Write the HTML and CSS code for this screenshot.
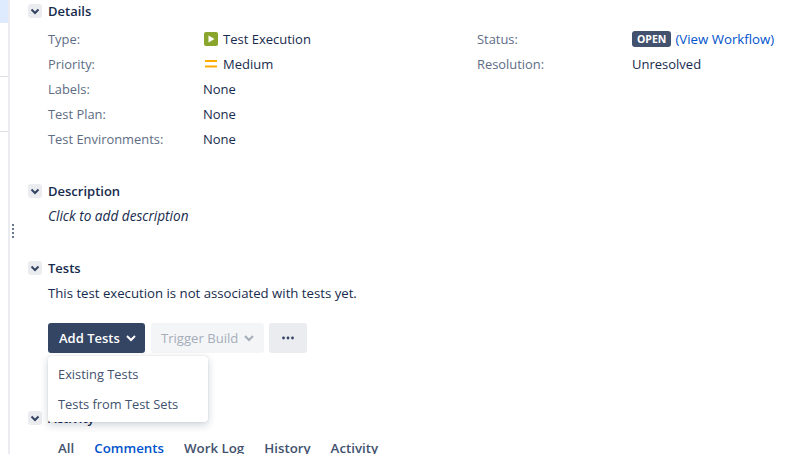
FILE: index.html
```html
<!DOCTYPE html>
<html lang="en">
<head>
<meta charset="utf-8">
<title>Test Execution</title>
<link rel="stylesheet" href="styles.css">
</head>
<body>
<div class="page">
  <aside class="rail">
    <div class="rail-item rail-active"></div>
    <div class="rail-item rail-mid"></div>
    <div class="rail-item rail-low"></div>
    <div class="grip"><i></i><i></i><i></i><i></i></div>
  </aside>
  <main class="content">
    <section class="module details">
      <h2 class="module-head"><span class="toggle"><svg viewBox="0 0 14 14" class="chev"><path d="M3.500 5.500 7 9l3.500-3.500"/></svg></span>Details</h2>
      <div class="details-grid">
        <dl class="fields col-left">
          <dt>Type:</dt><dd><svg class="type-icon" viewBox="0 0 14 14"><rect width="14" height="14" rx="2" fill="#89a52b"/><path d="M4.500 3.500 10.500 7 4.500 10.500z" fill="#fff"/></svg>Test Execution</dd>
          <dt>Priority:</dt><dd><svg class="type-icon" viewBox="0 0 14 14"><path d="M1 4h12M1 9.500h12" stroke="#ffab00" stroke-width="2"/></svg>Medium</dd>
          <dt>Labels:</dt><dd>None</dd>
          <dt>Test Plan:</dt><dd>None</dd>
          <dt>Test Environments:</dt><dd>None</dd>
        </dl>
        <dl class="fields col-right">
          <dt>Status:</dt><dd><span class="lozenge">OPEN</span><a href="#" class="link">(View Workflow)</a></dd>
          <dt>Resolution:</dt><dd>Unresolved</dd>
        </dl>
      </div>
    </section>
    <section class="module description">
      <h2 class="module-head"><span class="toggle"><svg viewBox="0 0 14 14" class="chev"><path d="M3.500 5.500 7 9l3.500-3.500"/></svg></span>Description</h2>
      <p class="body-text hint"><em>Click to add description</em></p>
    </section>
    <section class="module tests">
      <h2 class="module-head"><span class="toggle"><svg viewBox="0 0 14 14" class="chev"><path d="M3.500 5.500 7 9l3.500-3.500"/></svg></span>Tests</h2>
      <p class="body-text notice">This test execution is not associated with tests yet.</p>
      <div class="toolbar">
        <button class="btn btn-primary">Add Tests<svg viewBox="0 0 14 14" class="btn-chev"><path d="M3 5l4 4 4-4"/></svg></button>
        <button class="btn btn-disabled">Trigger Build<svg viewBox="0 0 14 14" class="btn-chev"><path d="M3 5l4 4 4-4"/></svg></button>
        <button class="btn btn-more"><svg viewBox="0 0 14 14" class="dots"><circle cx="2.500" cy="7" r="1.400"/><circle cx="7" cy="7" r="1.400"/><circle cx="11.500" cy="7" r="1.400"/></svg></button>
        <ul class="menu">
          <li>Existing Tests</li>
          <li>Tests from Test Sets</li>
        </ul>
      </div>
    </section>
    <section class="module activity">
      <h2 class="module-head"><span class="toggle"><svg viewBox="0 0 14 14" class="chev"><path d="M3.500 5.500 7 9l3.500-3.500"/></svg></span>Activity</h2>
      <nav class="tabs">
        <a class="tab">All</a>
        <a class="tab tab-active">Comments</a>
        <a class="tab">Work Log</a>
        <a class="tab">History</a>
        <a class="tab">Activity</a>
      </nav>
    </section>
  </main>
</div>
</body>
</html>
```
FILE: styles.css
```css
* { box-sizing: border-box; }
html, body { margin: 0; height: 100%; overflow: hidden; background: #fff; }
body { font: 13px/20px "Open Sans", "Liberation Sans", sans-serif; color: #172b4d; }
.page { display: flex; height: 454px; overflow: hidden; }
.rail { width: 10px; flex: none; border-right: 2px solid #ebecf0; position: relative; }
.rail-item { border-bottom: 1px solid #dfe1e6; }
.rail-active { height: 23px; background: #deebff; border-bottom: 0; }
.rail-mid { height: 54px; }
.rail-low { height: 55px; }
.grip { position: absolute; left: 12px; top: 224px; display: flex; flex-direction: column; gap: 2px; }
.grip i { width: 2px; height: 2px; background: #6b778c; display: block; }
.content { flex: 1; padding: 0 0 0 18px; min-width: 0; }
.module-head { margin: 0; display: flex; align-items: center; gap: 6px; font-size: 13px; font-weight: 600; line-height: 20px; color: #172b4d; }
.toggle { width: 14px; height: 14px; background: #ebecf0; border-radius: 3px; display: flex; }
.chev { width: 14px; height: 14px; fill: none; stroke: #344563; stroke-width: 2; }
.details { padding-top: 1px; height: 181px; }
.details-grid { display: flex; margin: 8px 0 0 20px; }
.fields { margin: 0; display: grid; row-gap: 5px; align-content: start; }
.col-left { width: 429px; grid-template-columns: 155px 1fr; }
.col-right { flex: 1; grid-template-columns: 155px 1fr; }
dt { color: #5e6c84; font-size: 12.900px; }
dd { margin: 0; display: flex; align-items: center; white-space: nowrap; }
.type-icon { width: 14px; height: 14px; margin: 0 5px 0 1px; }
.lozenge { background: #42526e; color: #fff; font-size: 10.500px; font-weight: 700; line-height: 16px; padding: 0 5px; border-radius: 3px; }
.link { color: #0052cc; text-decoration: none; margin-left: 4px; font-size: 13.250px; }
.description { height: 77px; padding-top: 0; }
.body-text { margin: 5px 0 0 20px; }
.hint { font-size: 13.600px; }
.notice { font-size: 13.200px; }
.tests { height: 150px; }
.toolbar { position: relative; display: flex; gap: 5px; margin: 20px 0 0 20px; }
.btn { height: 30px; border: 0; border-radius: 3px; font: 600 13px/20px "Open Sans", "Liberation Sans", sans-serif; display: flex; align-items: center; padding: 0 0 0 11px; }
.btn-primary { width: 97px; background: #344563; color: #fff; }
.btn-primary .btn-chev { stroke: #fff; }
.btn-disabled { width: 113px; margin-left: 1px; background: #f4f5f7; color: #a5adba; padding-left: 10px; font-weight: 400; font-size: 13.100px; }
.btn-chev { width: 14px; height: 14px; margin-left: 4px; fill: none; stroke: #a5adba; stroke-width: 2; }
.btn-more { width: 38px; background: #ebecf0; justify-content: center; padding: 0; }
.dots { width: 14px; height: 14px; fill: #344563; }
.menu { position: absolute; left: 0; top: 33px; width: 160px; margin: 0; padding: 3px 0; list-style: none; background: #fff; border-radius: 3px; box-shadow: 0 3px 8px rgba(9,30,66,.2), 0 0 1px rgba(9,30,66,.25); color: #42526e; z-index: 2; font-size: 12.850px; }
.menu li { height: 30px; padding: 5px 10px; }
.activity .tabs { display: flex; gap: 20px; margin: 10px 0 0 20px; padding-left: 10px; font-weight: 600; font-size: 13.300px; }
.tab { color: #42526e; }
.tab-active { color: #0052cc; }
```
